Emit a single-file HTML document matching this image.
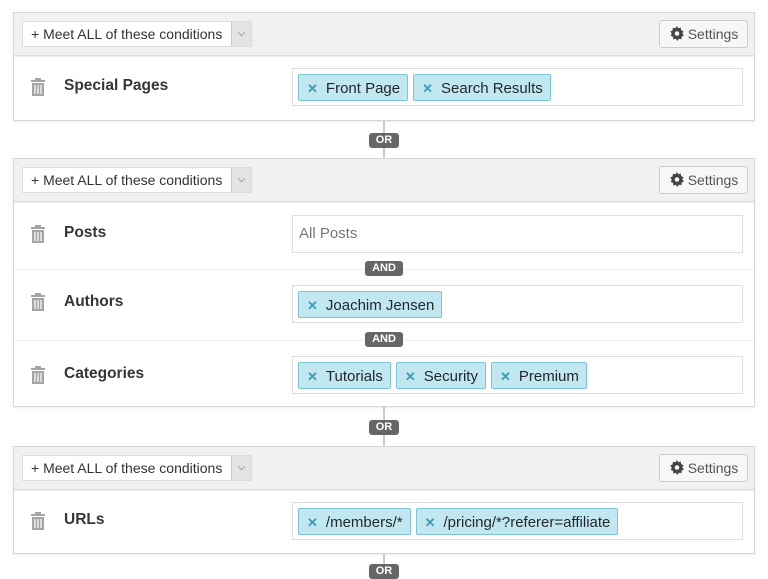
<!DOCTYPE html>
<html><head><meta charset="utf-8"><style>
*{box-sizing:border-box;margin:0;padding:0}
body{width:768px;height:576px;background:#fff;font-family:"Liberation Sans",sans-serif;position:relative;overflow:hidden;color:#32373c}
.g{position:absolute;left:13px;width:742px;border:1px solid #d5d5d5;background:#fff;box-shadow:0 1px 2px rgba(0,0,0,.08)}
.h{height:43px;background:#f1f1f1;border-bottom:1px solid #ddd;position:relative}
.sel{position:absolute;left:8px;top:8px;width:230px;height:26px;background:#fff;border:1px solid #ddd;font-size:14px;line-height:24px;padding-left:8px;color:#333}
.sel .ar{position:absolute;right:0;top:0;width:20px;height:24px;background:#e3e3e3;border-left:1px solid #c8c8c8;font-size:10px;text-align:center;color:#555}
.btn{position:absolute;right:6px;top:7px;width:89px;height:28px;background:#f7f7f7;border:1px solid #ccc;border-radius:3px;font-size:14px;line-height:26px;text-align:center;color:#555}
.row{position:relative;border-top:1px solid #eee}
.row:first-of-type{border-top:none}
.tr{position:absolute;left:16px;width:16px;height:18px}
.lb{position:absolute;left:50px;font-weight:bold;font-size:15.5px;color:#32373c}
.in{position:absolute;left:278px;width:451px;height:38px;border:1px solid #ddd;background:#fff;padding:5px 0 0 5px;font-size:15px}
.tag{display:inline-block;height:27px;line-height:27px;background:#c1e7f1;border:1px solid #7fc3d6;border-radius:2px;padding:0 7px 0 8px;margin-right:5px;font-size:15px;color:#23282d;vertical-align:top}
.tag b{color:#3b9cb8;font-size:13px;margin-right:8px}
.bd{position:absolute;background:#666;color:#fff;font-weight:bold;font-size:11px;height:15px;line-height:15px;border-radius:3px;text-align:center;z-index:2}
.vl{position:absolute;left:383px;width:2px;background:#ccc}
</style></head><body>
<svg width="0" height="0" style="position:absolute"><defs><g id="tr"><rect x="1" y="2" width="14" height="2" fill="#a5a5a5"/><rect x="5" y="0" width="6" height="2" fill="#a5a5a5"/><path d="M2 5h12v13H2z" fill="#a5a5a5"/><path d="M5 7v9M8 7v9M11 7v9" stroke="#fff" stroke-width="1.2"/></g>
<g id="gear"><path d="M8 0l1.3 2.2 2.5-.7.3 2.6 2.4 1L13.3 7.4 14.9 9.4 12.6 10.7l-.2 2.6-2.5-.5L8.4 15 6.9 12.8 4.4 13.5l-.3-2.6-2.4-1 1.1-2.3L1.2 5.5 3.6 4.4 3.9 1.8l2.5.5z" fill="#444"/><circle cx="8" cy="7.5" r="2.3" fill="#f7f7f7"/></g></defs></svg>

<div class="vl" style="top:120px;height:38px"></div>
<div class="bd" style="left:369px;top:133px;width:30px">OR</div>
<div class="vl" style="top:406px;height:40px"></div>
<div class="bd" style="left:369px;top:420px;width:30px">OR</div>
<div class="vl" style="top:553px;height:23px"></div>
<div class="bd" style="left:369px;top:564px;width:30px">OR</div>

<div class="g" style="top:12px;height:109px">
 <div class="h"><div class="sel">+ Meet ALL of these conditions<div class="ar">⌵</div></div><div class="btn"><svg width="15" height="15" style="vertical-align:-2px;margin-right:4px"><use href="#gear"/></svg>Settings</div></div>
 <div class="row" style="height:64px"><svg class="tr" style="top:21px"><use href="#tr"/></svg><div class="lb" style="top:20px">Special Pages</div><div class="in" style="top:11px"><span class="tag"><b>✕</b>Front Page</span><span class="tag"><b>✕</b>Search Results</span></div></div>
</div>

<div class="g" style="top:158px;height:249px">
 <div class="h"><div class="sel">+ Meet ALL of these conditions<div class="ar">⌵</div></div><div class="btn"><svg width="15" height="15" style="vertical-align:-2px;margin-right:4px"><use href="#gear"/></svg>Settings</div></div>
 <div class="row" style="height:67px"><svg class="tr" style="top:22px"><use href="#tr"/></svg><div class="lb" style="top:21px">Posts</div><div class="in" style="top:12px;color:#777;padding:9px 0 0 6px">All Posts</div></div>
 <div class="row" style="height:71px"><svg class="tr" style="top:23px"><use href="#tr"/></svg><div class="lb" style="top:23px">Authors</div><div class="in" style="top:15px"><span class="tag"><b>✕</b>Joachim Jensen</span></div></div>
 <div class="row" style="height:67px"><svg class="tr" style="top:25px"><use href="#tr"/></svg><div class="lb" style="top:24px">Categories</div><div class="in" style="top:15px"><span class="tag"><b>✕</b>Tutorials</span><span class="tag"><b>✕</b>Security</span><span class="tag"><b>✕</b>Premium</span></div></div>
 <div class="bd" style="left:351px;top:102px;width:38px">AND</div>
 <div class="bd" style="left:351px;top:173px;width:38px">AND</div>
</div>

<div class="g" style="top:446px;height:108px">
 <div class="h"><div class="sel">+ Meet ALL of these conditions<div class="ar">⌵</div></div><div class="btn"><svg width="15" height="15" style="vertical-align:-2px;margin-right:4px"><use href="#gear"/></svg>Settings</div></div>
 <div class="row" style="height:64px"><svg class="tr" style="top:21px"><use href="#tr"/></svg><div class="lb" style="top:20px">URLs</div><div class="in" style="top:11px"><span class="tag"><b>✕</b>/members/*</span><span class="tag"><b>✕</b>/pricing/*?referer=affiliate</span></div></div>
</div>
</body></html>
